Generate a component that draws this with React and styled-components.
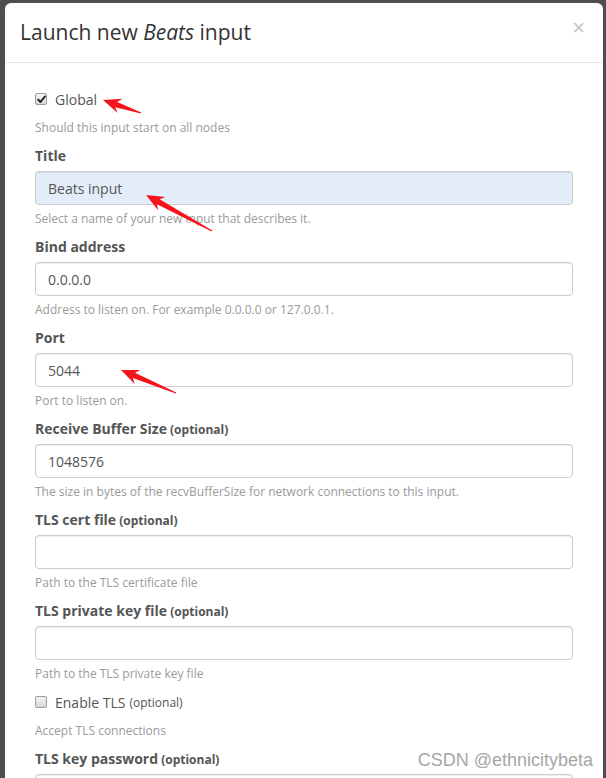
import React from 'react';
import styled, { createGlobalStyle } from 'styled-components';

const GlobalStyle = createGlobalStyle`
  html, body {
    margin: 0;
    padding: 0;
    background: #4e4e4e;
  }
  * {
    box-sizing: border-box;
  }
`;

const fields = [
  { label: 'Title', value: 'Beats input', help: 'Select a name of your new input that describes it.', filled: true },
  { label: 'Bind address', value: '0.0.0.0', help: 'Address to listen on. For example 0.0.0.0 or 127.0.0.1.' },
  { label: 'Port', value: '5044', help: 'Port to listen on.' },
  { label: 'Receive Buffer Size', optional: true, value: '1048576', help: 'The size in bytes of the recvBufferSize for network connections to this input.' },
  { label: 'TLS cert file', optional: true, value: '', help: 'Path to the TLS certificate file' },
  { label: 'TLS private key file', optional: true, value: '', help: 'Path to the TLS private key file' },
];

// arrow polygon from tip to tail, tapering shaft
function arrowPoints(tip, tail) {
  const [tx, ty] = tip;
  const [ex, ey] = tail;
  const dx = ex - tx;
  const dy = ey - ty;
  const len = Math.hypot(dx, dy);
  const ux = dx / len;
  const uy = dy / len;
  const nx = -uy;
  const ny = ux;
  const head = 18;
  const hw = 7.5;
  const sw = 2.8;
  const bx = tx + ux * head;
  const by = ty + uy * head;
  const nb = tx + ux * (head - 4);
  const nby = ty + uy * (head - 4);
  const pts = [
    [tx, ty],
    [bx + nx * hw, by + ny * hw],
    [nb + nx * sw, nby + ny * sw],
    [ex + nx * 0.6, ey + ny * 0.6],
    [ex - nx * 0.6, ey - ny * 0.6],
    [nb - nx * sw, nby - ny * sw],
    [bx - nx * hw, by - ny * hw],
  ];
  return pts.map(p => p.map(v => v.toFixed(1)).join(',')).join(' ');
}

const arrows = [
  { tip: [103, 100], tail: [141, 113] },
  { tip: [146, 195], tail: [212, 231] },
  { tip: [121, 370], tail: [176, 393] },
];

function CheckMark() {
  return (
    <svg width="9" height="9" viewBox="0 0 9 9">
      <path d="M1.2 4.6 L3.5 7 L7.8 1.6" fill="none" stroke="#222" strokeWidth="1.9" strokeLinecap="round" strokeLinejoin="round" />
    </svg>
  );
}

export default function App() {
  return (
    <>
      <GlobalStyle />
      <Page>
        <Modal>
          <Header>
            <Title>
              Launch new <em>Beats</em> input
            </Title>
            <Close>×</Close>
          </Header>
          <Body>
            <CheckRow>
              <Box checked>
                <CheckMark />
              </Box>
              Global
            </CheckRow>
            <Help after>Should this input start on all nodes</Help>

            {fields.map(f => (
              <Group key={f.label}>
                <Label>
                  {f.label}
                  {f.optional && <Optional> (optional)</Optional>}
                </Label>
                <Input filled={f.filled}>{f.value}</Input>
                <Help>{f.help}</Help>
              </Group>
            ))}

            <CheckRow>
              <Box />
              Enable TLS <Small>(optional)</Small>
            </CheckRow>
            <Help after>Accept TLS connections</Help>

            <Group>
              <Label>
                TLS key password<Optional> (optional)</Optional>
              </Label>
              <Input />
            </Group>
          </Body>
        </Modal>

        <Annotations width="606" height="778" viewBox="0 0 606 778">
          {arrows.map((a, i) => (
            <polygon key={i} points={arrowPoints(a.tip, a.tail)} fill="#f5141b" />
          ))}
        </Annotations>
        <Watermark>CSDN @ethnicitybeta</Watermark>
      </Page>
    </>
  );
}

const Page = styled.div`
  position: relative;
  width: 606px;
  height: 778px;
  overflow: hidden;
  padding: 3px 3px 0 5px;
  font-family: 'Open Sans', 'Noto Sans', sans-serif;
`;

const Modal = styled.div`
  background: #fff;
  border-radius: 6px 6px 0 0;
  min-height: 800px;
`;

const Header = styled.div`
  display: flex;
  justify-content: space-between;
  align-items: flex-start;
  padding: 15px;
  border-bottom: 1px solid #e5e5e5;
`;

const Title = styled.h4`
  margin: 0;
  font-size: 21px;
  font-weight: 400;
  line-height: 29px;
  color: #333;

  em {
    font-style: italic;
  }
`;

const Close = styled.span`
  font-family: 'Liberation Sans', Arial, sans-serif;
  font-size: 22px;
  font-weight: 400;
  line-height: 20px;
  color: #c4c4c4;
  margin: 0 3px 0 0;
`;

const Body = styled.div`
  padding: 16px 30px 0 30px;
`;

const CheckRow = styled.div`
  display: flex;
  align-items: center;
  gap: 8px;
  height: 20px;
  margin: 10px 0 0;
  font-size: 14px;
  color: #555;
`;

const Box = styled.span`
  display: inline-flex;
  align-items: center;
  justify-content: center;
  width: 12px;
  height: 12px;
  border: 1px solid #9c9c9c;
  border-radius: 2px;
  background: linear-gradient(#f4f4f4, #d8d8d8);
`;

const Small = styled.span`
  font-size: 12px;
  margin-left: -4px;
`;

const Group = styled.div`
  margin: 0;
`;

const Label = styled.div`
  height: 20px;
  font-size: 14px;
  font-weight: 700;
  line-height: 20px;
  color: #555;
  margin-bottom: 5px;
`;

const Optional = styled.span`
  font-size: 12px;
  font-weight: 700;
  line-height: 1;
`;

const Input = styled.div`
  height: 34px;
  padding: 0 12px;
  display: flex;
  align-items: center;
  font-size: 14px;
  color: #555;
  background: ${p => (p.filled ? '#e3edf9' : '#fff')};
  border: 1px solid #ccc;
  border-radius: 4px;
  box-shadow: inset 0 1px 1px rgba(0, 0, 0, 0.075);
`;

const Help = styled.div`
  height: 17px;
  font-size: 12px;
  line-height: 17px;
  color: #9a9a9a;
  margin: ${p => (p.after ? '10px' : '5px')} 0 10px;
`;

const Annotations = styled.svg`
  position: absolute;
  left: 0;
  top: 0;
  pointer-events: none;
`;

const Watermark = styled.div`
  position: absolute;
  right: 13px;
  top: 749px;
  font-family: 'Liberation Sans', Arial, sans-serif;
  font-size: 18px;
  line-height: 22px;
  color: #a6a6a6;
`;
